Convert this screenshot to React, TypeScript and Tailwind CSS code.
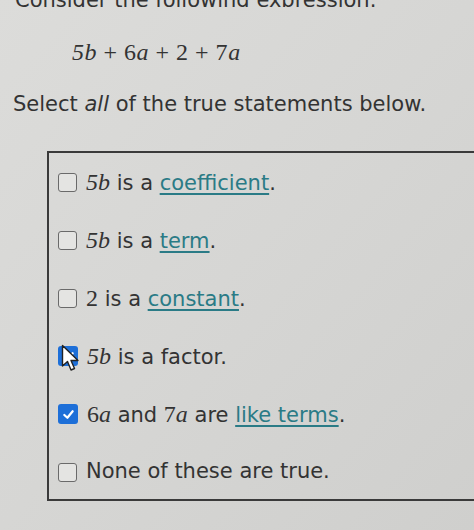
import React from "react";

function Box({ checked = false }: { checked?: boolean }) {
  if (checked) {
    return (
      <span className="w-[20px] h-[20px] shrink-0 rounded-[3px] bg-[#1d6fd8] flex items-center justify-center">
        <svg width="13" height="13" viewBox="0 0 14 14">
          <path d="M2.5 7.5 L5.8 10.5 L11.5 3.5" fill="none" stroke="white" strokeWidth="2.4" strokeLinecap="round" strokeLinejoin="round" />
        </svg>
      </span>
    );
  }
  return <span className="w-[19px] h-[19px] shrink-0 rounded-[3px] border-[1.5px] border-[#6a6a6a] bg-[#e4e4e2]" />;
}

const M = ({ children }: { children: React.ReactNode }) => (
  <span className="font-['Liberation_Serif',serif] text-[24px]">{children}</span>
);
const I = ({ children }: { children: React.ReactNode }) => <i className="font-['Liberation_Serif',serif]">{children}</i>;
const L = ({ children }: { children: React.ReactNode }) => (
  <span className="text-[#2a7b86] underline underline-offset-[3px] decoration-[1.5px]">{children}</span>
);

function Row({ checked, cursor, children }: { checked?: boolean; cursor?: boolean; children: React.ReactNode }) {
  return (
    <div className="h-[58px] flex items-center gap-[9px] relative">
      <Box checked={checked} />
      <span>{children}</span>
      {cursor && (
        <svg className="absolute left-[3px] top-[17px]" width="20" height="30" viewBox="0 0 20 30">
          <path d="M1.5 1.5 L1.5 22 L6.5 17.5 L10 26 L13.5 24.5 L10 16.5 L17 16.5 Z" fill="white" stroke="#222" strokeWidth="1.4" strokeLinejoin="round" />
        </svg>
      )}
    </div>
  );
}

export default function App() {
  return (
    <div className="w-[474px] h-[530px] overflow-hidden bg-gradient-to-br from-[#dcdcda] via-[#d6d6d4] to-[#cfcfcd] text-[#333333] font-['DejaVu_Sans',sans-serif]">
      <div className="text-[21px] leading-none pl-[15px] -mt-[10px] h-[17px] overflow-hidden">Consider the following expression.</div>
      <div className="pl-[72px] pt-[27px] h-[85px] font-['Liberation_Serif',serif] text-[24px] tracking-[0.5px]">
        <i>5b</i> + 6<i>a</i> + 2 + 7<i>a</i>
      </div>
      <div className="pl-[13px] text-[21px] leading-[24px]">
        Select <i>all</i> of the true statements below.
      </div>
      <div className="ml-[47px] mt-[35px] h-[350px] border-t-2 border-l-2 border-b-2 border-[#3a3a3a] pl-[9px] text-[21px]">
        <Row><M><I>5b</I></M> is a <L>coefficient</L>.</Row>
        <Row><M><I>5b</I></M> is a <L>term</L>.</Row>
        <Row><M>2</M> is a <L>constant</L>.</Row>
        <Row checked cursor><M><I>5b</I></M> is a factor.</Row>
        <Row checked><M>6<I>a</I></M> and <M>7<I>a</I></M> are <L>like terms</L>.</Row>
        <Row>None of these are true.</Row>
      </div>
    </div>
  );
}
